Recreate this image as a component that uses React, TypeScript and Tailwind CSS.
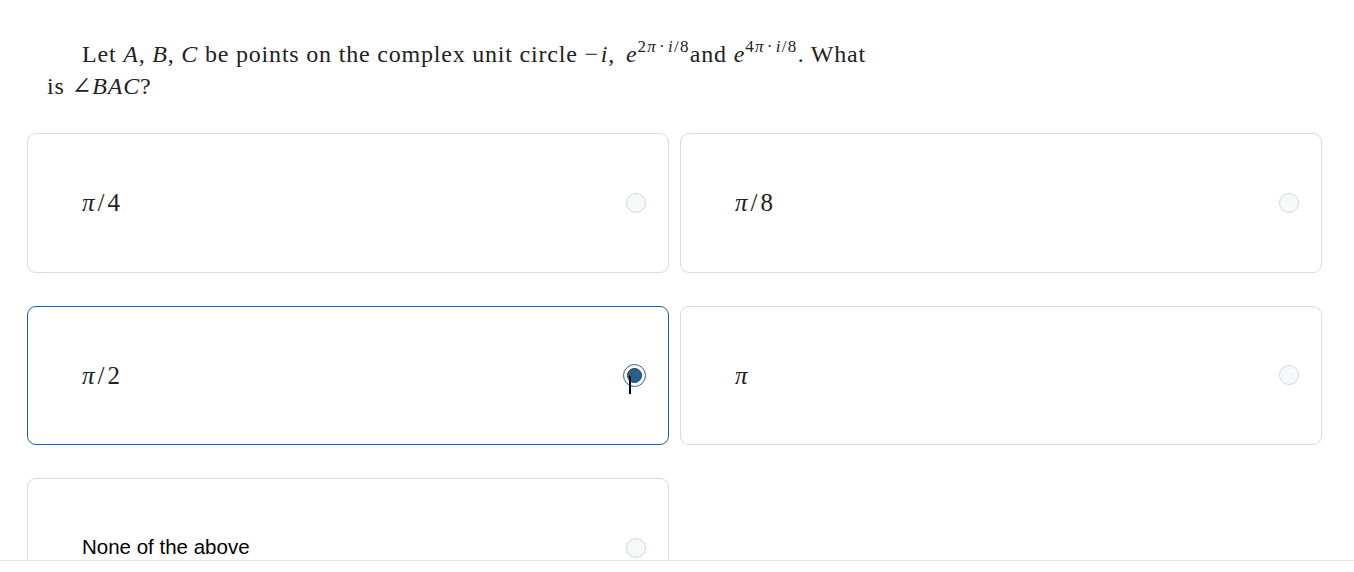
import React from "react";

const serif = { fontFamily: '"Liberation Serif", "DejaVu Serif", serif' };

function Radio({ selected }: { selected?: boolean }) {
  if (selected) {
    return (
      <div className="relative w-[23px] h-[23px] shrink-0 rounded-full border-[1.5px] border-[#2c5f8a] bg-white flex items-center justify-center">
        <div className="w-[15px] h-[15px] rounded-full bg-[#2c5f8a] border border-[#1c3f5e]" />
        <div className="absolute left-[5px] top-[11px] w-[1.5px] h-[18px] bg-black" />
      </div>
    );
  }
  return <div className="w-[20px] h-[20px] shrink-0 rounded-full border border-[#d4d6dd] bg-[#f7f8fa]" />;
}

function Card({ children, selected }: { children: React.ReactNode; selected?: boolean }) {
  return (
    <div
      className={`h-[139.5px] rounded-[9px] border bg-white flex items-center justify-between pl-[54px] pr-[22px] ${
        selected ? "border-[#2c5f8a]" : "border-[#d9dae1]"
      }`}
    >
      <div className="text-[#222]">{children}</div>
      <Radio selected={selected} />
    </div>
  );
}

function Frac({ d }: { d: string }) {
  return (
    <span className="text-[25px] tracking-[3px]" style={serif}>
      <i>π</i>
      <span>/{d}</span>
    </span>
  );
}

export default function App() {
  return (
    <div className="w-[1354px] h-[561px] overflow-hidden border-b border-[#e3e4e8] bg-white">
      <p
        className="pl-[47px] pt-[38px] text-[24px] leading-[32px] text-[#222] indent-[35px] tracking-[0.8px]"
        style={serif}
      >
        Let <i>A</i>, <i>B</i>, <i>C</i> be points on the complex unit circle{" "}
        <span className="mr-[2px]">−</span>
        <i>i</i>,<span className="ml-[4px]"> </span>
        <i>e</i>
        <span className="relative -top-[10px] text-[17px] leading-none tracking-[1.3px]">
          2<i>π</i>
          <span className="mx-[2px]">·</span>
          <i>i</i>/8
        </span>
        and <i>e</i>
        <span className="relative -top-[10px] text-[17px] leading-none tracking-[1.3px]">
          4<i>π</i>
          <span className="mx-[2px]">·</span>
          <i>i</i>/8
        </span>
        . What
        <br />
        is ∠<i>BAC</i>?
      </p>
      <div className="grid grid-cols-2 gap-x-[11px] gap-y-[33px] pl-[27px] pr-[32px] mt-[31px]">
        <Card>
          <Frac d="4" />
        </Card>
        <Card>
          <Frac d="8" />
        </Card>
        <Card selected>
          <Frac d="2" />
        </Card>
        <Card>
          <span className="text-[25px]" style={serif}>
            <i>π</i>
          </span>
        </Card>
        <Card>
          <span
            className="text-[20.5px] text-black"
            style={{ fontFamily: '"Liberation Sans", Arial, sans-serif' }}
          >
            None of the above
          </span>
        </Card>
      </div>
    </div>
  );
}
